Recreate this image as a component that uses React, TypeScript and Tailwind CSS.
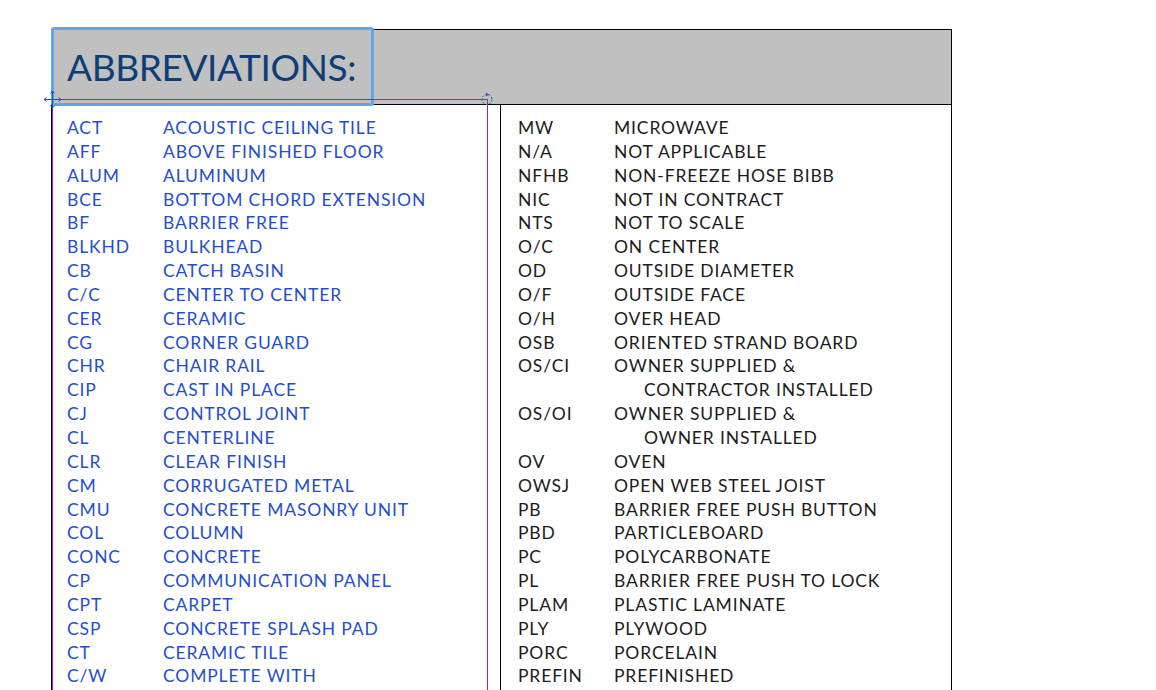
import React from 'react'

type Entry = { abbr: string; text: string; more?: string }

const left: Entry[] = [
  { abbr: 'ACT', text: 'ACOUSTIC CEILING TILE' },
  { abbr: 'AFF', text: 'ABOVE FINISHED FLOOR' },
  { abbr: 'ALUM', text: 'ALUMINUM' },
  { abbr: 'BCE', text: 'BOTTOM CHORD EXTENSION' },
  { abbr: 'BF', text: 'BARRIER FREE' },
  { abbr: 'BLKHD', text: 'BULKHEAD' },
  { abbr: 'CB', text: 'CATCH BASIN' },
  { abbr: 'C/C', text: 'CENTER TO CENTER' },
  { abbr: 'CER', text: 'CERAMIC' },
  { abbr: 'CG', text: 'CORNER GUARD' },
  { abbr: 'CHR', text: 'CHAIR RAIL' },
  { abbr: 'CIP', text: 'CAST IN PLACE' },
  { abbr: 'CJ', text: 'CONTROL JOINT' },
  { abbr: 'CL', text: 'CENTERLINE' },
  { abbr: 'CLR', text: 'CLEAR FINISH' },
  { abbr: 'CM', text: 'CORRUGATED METAL' },
  { abbr: 'CMU', text: 'CONCRETE MASONRY UNIT' },
  { abbr: 'COL', text: 'COLUMN' },
  { abbr: 'CONC', text: 'CONCRETE' },
  { abbr: 'CP', text: 'COMMUNICATION PANEL' },
  { abbr: 'CPT', text: 'CARPET' },
  { abbr: 'CSP', text: 'CONCRETE SPLASH PAD' },
  { abbr: 'CT', text: 'CERAMIC TILE' },
  { abbr: 'C/W', text: 'COMPLETE WITH' },
]

const right: Entry[] = [
  { abbr: 'MW', text: 'MICROWAVE' },
  { abbr: 'N/A', text: 'NOT APPLICABLE' },
  { abbr: 'NFHB', text: 'NON-FREEZE HOSE BIBB' },
  { abbr: 'NIC', text: 'NOT IN CONTRACT' },
  { abbr: 'NTS', text: 'NOT TO SCALE' },
  { abbr: 'O/C', text: 'ON CENTER' },
  { abbr: 'OD', text: 'OUTSIDE DIAMETER' },
  { abbr: 'O/F', text: 'OUTSIDE FACE' },
  { abbr: 'O/H', text: 'OVER HEAD' },
  { abbr: 'OSB', text: 'ORIENTED STRAND BOARD' },
  { abbr: 'OS/CI', text: 'OWNER SUPPLIED &', more: 'CONTRACTOR INSTALLED' },
  { abbr: 'OS/OI', text: 'OWNER SUPPLIED &', more: 'OWNER INSTALLED' },
  { abbr: 'OV', text: 'OVEN' },
  { abbr: 'OWSJ', text: 'OPEN WEB STEEL JOIST' },
  { abbr: 'PB', text: 'BARRIER FREE PUSH BUTTON' },
  { abbr: 'PBD', text: 'PARTICLEBOARD' },
  { abbr: 'PC', text: 'POLYCARBONATE' },
  { abbr: 'PL', text: 'BARRIER FREE PUSH TO LOCK' },
  { abbr: 'PLAM', text: 'PLASTIC LAMINATE' },
  { abbr: 'PLY', text: 'PLYWOOD' },
  { abbr: 'PORC', text: 'PORCELAIN' },
  { abbr: 'PREFIN', text: 'PREFINISHED' },
]

function AbbrList({ items, color }: { items: Entry[]; color: string }) {
  return (
    <div className={`flex flex-col text-[17.5px] leading-[23.85px] tracking-[0.85px] ${color}`}>
      {items.map((it) => (
        <div key={it.abbr} className="flex">
          <div className="w-[96px] shrink-0">{it.abbr}</div>
          <div className="flex flex-col">
            <span>{it.text}</span>
            {it.more && <span className="pl-[30px]">{it.more}</span>}
          </div>
        </div>
      ))}
    </div>
  )
}

export default function App() {
  return (
    <div className="relative w-[1156px] h-[690px] overflow-hidden bg-white font-['Lato',sans-serif]">
      <div className="ml-[51px] mt-[29px] w-[901px] h-[700px] border border-black flex flex-col">
        <div className="h-[75px] bg-[#c0c0c0] border-b border-black flex items-center pl-[15px]">
          <h1 className="text-[37px] leading-none text-[#0d3e78] tracking-[-0.4px] -mt-[2px]">ABBREVIATIONS:</h1>
        </div>
        <div className="flex flex-1">
          <div className="w-[449px] border-r border-black pl-[15px] pt-[11px]">
            <AbbrList items={left} color="text-[#1f4fcf]" />
          </div>
          <div className="flex-1 pl-[17px] pt-[11px]">
            <AbbrList items={right} color="text-[#1c1c1c]" />
          </div>
        </div>
      </div>

      {/* selection frame */}
      <div className="absolute left-[51px] top-[27px] w-[323px] h-[79px] border-[3px] border-[#62a6ea] rounded-[3px]" />

      {/* guides */}
      <div className="absolute left-[52px] top-[99px] w-[436px] h-px bg-[#a41bc8]" />
      <div className="absolute left-[52px] top-[99px] w-px h-[600px] bg-[#a41bc8]" />
      <div className="absolute left-[487px] top-[99px] w-px h-[600px] bg-[#a41bc8]" />

      {/* move handle */}
      <svg className="absolute left-[43px] top-[90px]" width="20" height="20" viewBox="0 0 20 20" fill="none" stroke="#1f4fbf" strokeWidth="1">
        <path d="M1 9.5h17M9.5 1v17" />
        <path d="M3.5 7.5 1 9.5l2.5 2M15.5 7.5 18 9.5l-2.5 2M7.5 3.5 9.5 1l2 2.5M7.5 15.5l2 2.5 2-2.5" />
      </svg>

      {/* rotate handle */}
      <svg className="absolute left-[479px] top-[91px]" width="16" height="16" viewBox="0 0 16 16" fill="none" stroke="#1f4fbf" strokeWidth="1">
        <circle cx="8" cy="8.5" r="5" strokeDasharray="2 1.5" />
        <path d="M7 2 9.5 3.5 7 5" />
      </svg>
    </div>
  )
}
